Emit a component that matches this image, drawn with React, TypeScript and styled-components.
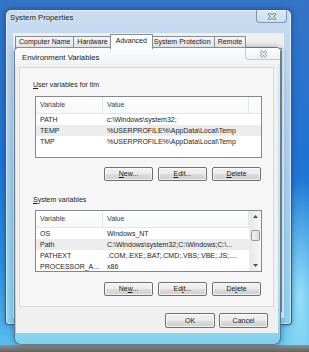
import React from 'react';
import styled, { createGlobalStyle } from 'styled-components';

const GlobalStyle = createGlobalStyle`
  html, body {
    margin: 0;
    padding: 0;
  }
  body {
    width: 309px;
    height: 352px;
    overflow: hidden;
    font-family: "Liberation Sans", Arial, sans-serif;
  }
`;

const userVars = [
  { name: 'PATH', value: 'c:\\Windows\\system32;' },
  { name: 'TEMP', value: '%USERPROFILE%\\AppData\\Local\\Temp', hot: true },
  { name: 'TMP', value: '%USERPROFILE%\\AppData\\Local\\Temp' },
];

const systemVars = [
  { name: 'OS', value: 'Windows_NT' },
  { name: 'Path', value: 'C:\\Windows\\system32;C:\\Windows;C:\\...', hot: true },
  { name: 'PATHEXT', value: '.COM;.EXE;.BAT;.CMD;.VBS;.VBE;.JS;....' },
  { name: 'PROCESSOR_A...', value: 'x86' },
];

const tabs = ['Computer Name', 'Hardware', 'Advanced', 'System Protection', 'Remote'];

/* ---------- desktop + windows ---------- */

const Desktop = styled.div`
  position: relative;
  width: 309px;
  height: 352px;
  overflow: hidden;
  background:
    linear-gradient(180deg, transparent 0, transparent 345px, #8e8e8e 345px, #626262 352px),
    radial-gradient(ellipse 30px 120px at 300px 300px, rgba(160, 230, 250, 0.9), rgba(160, 230, 250, 0) 100%),
    linear-gradient(180deg, #3574c6 0%, #1f72d2 45%, #2b8fe0 75%, #5ec0ee 100%);
`;

const SysWindow = styled.div`
  position: absolute;
  left: 5px;
  top: 9px;
  width: 287px;
  height: 316px;
  box-sizing: border-box;
  display: flex;
  flex-direction: column;
  border: 1px solid rgba(25, 50, 85, 0.75);
  border-radius: 6px 6px 4px 4px;
  background: linear-gradient(180deg, #c9dcf0 0%, #b6d2ee 25%, #a2cdee 60%, #8ad3f1 100%);
  box-shadow: inset 0 0 0 1px rgba(255, 255, 255, 0.55), 0 0 5px rgba(0, 20, 60, 0.35);
`;

const TitleBar = styled.div`
  display: flex;
  align-items: flex-start;
  height: 23px;
  padding-left: 4px;
`;

const WindowTitle = styled.span`
  margin-top: 3px;
  font-size: 7.75px;
  line-height: 10px;
  color: #1b1b1b;
  text-shadow: 0 0 4px rgba(255, 255, 255, 0.9);
`;

const CaptionClose = styled.div`
  margin-left: auto;
  margin-right: 4px;
  width: 31px;
  height: 13px;
  box-sizing: border-box;
  display: flex;
  align-items: center;
  justify-content: center;
  border: 1px solid rgba(60, 85, 120, 0.55);
  border-top: none;
  border-radius: 0 0 4px 4px;
  background: linear-gradient(180deg, rgba(255, 255, 255, 0.35), rgba(255, 255, 255, 0.1));
`;

const Client = styled.div`
  flex: 1;
  margin: 0 7px 6px 7px;
  background: #f0f0f0;
  display: flex;
  flex-direction: column;
  padding: 1px 2px 6px 2px;
`;

const TabStrip = styled.div`
  display: flex;
  align-items: flex-end;
  height: 14px;
`;

const Tab = styled.div<{ $active?: boolean }>`
  position: relative;
  z-index: ${p => (p.$active ? 2 : 1)};
  height: ${p => (p.$active ? 15 : 12)}px;
  margin: 0 ${p => (p.$active ? -2 : 0)}px ${p => (p.$active ? -1 : 0)}px;
  padding: 0 ${p => (p.$active ? 5 : 3)}px;
  box-sizing: border-box;
  border: 1px solid #898c95;
  border-bottom: ${p => (p.$active ? 'none' : '1px solid #898c95')};
  margin-left: ${p => (p.$active ? -2 : -1)}px;
  background: ${p => (p.$active ? '#ffffff' : 'linear-gradient(180deg, #f5f5f5, #e2e2e2)')};
  font-size: 7px;
  line-height: ${p => (p.$active ? 12 : 10)}px;
  color: #1a1a1a;
  white-space: nowrap;
  &:first-child {
    margin-left: 0;
  }
`;

const TabPanel = styled.div`
  flex: 1;
  border: 1px solid #898c95;
  background: #ffffff;
`;

/* ---------- environment variables dialog ---------- */

const EnvDialog = styled.div`
  position: absolute;
  left: 14px;
  top: 47px;
  width: 267px;
  height: 298px;
  box-sizing: border-box;
  display: flex;
  flex-direction: column;
  border: 1px solid rgba(70, 90, 110, 0.75);
  border-radius: 5px 5px 7px 7px;
  background: linear-gradient(180deg, #dcebf6 0%, #b4e0f3 80%, #82d1ef 100%);
  box-shadow: 0 0 6px rgba(0, 30, 60, 0.35);
`;

const EnvTitleBar = styled.div`
  display: flex;
  align-items: flex-start;
  height: 16px;
  padding-left: 7px;
  border-radius: 4px 4px 0 0;
  background: linear-gradient(180deg, #fbfcfd, #f1f3f5);
`;

const EnvTitle = styled.span`
  margin-top: 5px;
  font-size: 7.75px;
  line-height: 10px;
  color: #1b1b1b;
`;

const EnvClose = styled.div`
  margin-left: auto;
  width: 35px;
  height: 12px;
  box-sizing: border-box;
  display: flex;
  align-items: center;
  justify-content: center;
  border: 1px solid #c3cad3;
  border-top: none;
  border-right: none;
  border-radius: 0 4px 0 4px;
  background: linear-gradient(180deg, #ffffff, #eef0f3);
`;

const EnvBody = styled.div`
  flex: 1;
  margin: 0 2px 11px 1px;
  padding: 3px 4px 5px 3px;
  background: #f0f0f0;
  display: flex;
  flex-direction: column;
`;

const Panel = styled.div`
  border: 1px solid #dadada;
  background: #f6f6f6;
  padding: 12px 11px 10px 15px;
  display: flex;
  flex-direction: column;
`;

const SectionLabel = styled.div<{ $gap: number }>`
  margin: ${p => p.$gap}px 0 0 -2px;
  font-size: 7px;
  line-height: 9px;
  color: #1e1e1e;
`;

const ListBox = styled.div<{ $gap: number }>`
  margin-top: ${p => p.$gap}px;
  height: 62px;
  box-sizing: border-box;
  border: 1px solid #828790;
  background: #ffffff;
  display: flex;
  overflow: hidden;
`;

const ListContent = styled.div`
  flex: 1;
  min-width: 0;
  display: flex;
  flex-direction: column;
`;

const HeaderRow = styled.div`
  display: grid;
  grid-template-columns: 67px 146px 1fr;
  height: 16px;
  flex-shrink: 0;
  border-bottom: 1px solid #e5e5e5;
  background: linear-gradient(180deg, #ffffff, #f7f8f9);
`;

const HeaderCell = styled.div`
  padding-left: 4px;
  border-right: 1px solid #e5e5e5;
  font-size: 7px;
  line-height: 16px;
  color: #3a4656;
  &:last-child {
    border-right: none;
  }
`;

const Row = styled.div<{ $hot?: boolean }>`
  display: grid;
  grid-template-columns: 67px 1fr;
  height: 11px;
  flex-shrink: 0;
  background: ${p => (p.$hot ? '#ececec' : 'transparent')};
`;

const Cell = styled.div`
  padding-left: 4px;
  font-size: 7px;
  line-height: 11px;
  color: #1e1e1e;
  white-space: nowrap;
  overflow: hidden;
`;

const ScrollBar = styled.div`
  width: 11px;
  display: flex;
  flex-direction: column;
  background: linear-gradient(90deg, #e8e8e8, #f6f6f6);
  border-left: 1px solid #ececec;
`;

const ScrollArrow = styled.div`
  height: 11px;
  display: flex;
  align-items: center;
  justify-content: center;
`;

const ScrollTrack = styled.div`
  flex: 1;
  padding: 8px 1px 0;
`;

const ScrollThumb = styled.div`
  height: 11px;
  box-sizing: border-box;
  border: 1px solid #979797;
  border-radius: 2px;
  background: linear-gradient(90deg, #f3f3f3, #dcdcdc);
`;

const ButtonRow = styled.div<{ $gap: number; $right: number }>`
  display: flex;
  justify-content: flex-end;
  gap: 5px;
  margin-top: ${p => p.$gap}px;
  margin-right: ${p => p.$right}px;
`;

const PushButton = styled.button<{ $w?: number; $h?: number }>`
  width: ${p => p.$w ?? 49}px;
  height: ${p => p.$h ?? 14}px;
  box-sizing: border-box;
  padding: 0;
  border: 1px solid #707070;
  border-radius: 2px;
  background: linear-gradient(180deg, #f2f2f2 0%, #ebebeb 50%, #dddddd 51%, #cfcfcf 100%);
  box-shadow: inset 0 0 0 1px rgba(255, 255, 255, 0.7);
  font-family: "Liberation Sans", Arial, sans-serif;
  font-size: 7px;
  line-height: 10px;
  color: #1a1a1a;
`;

const FooterRow = styled.div`
  display: flex;
  justify-content: flex-end;
  gap: 4px;
  margin: 6px 6px 0 0;
`;

/* ---------- small drawings ---------- */

const CloseGlyph = () => (
  <svg width="8" height="7" viewBox="0 0 8 7">
    <path d="M1.5 1 L6.5 6 M6.5 1 L1.5 6" stroke="#4a5a70" strokeWidth="2.6" strokeLinecap="round" />
    <path d="M1.5 1 L6.5 6 M6.5 1 L1.5 6" stroke="#ffffff" strokeWidth="1.3" strokeLinecap="round" />
  </svg>
);

const HollowClose = () => (
  <svg width="9" height="8" viewBox="0 0 9 8">
    <path d="M1.5 1 L7.5 7 M7.5 1 L1.5 7" stroke="#8a8f96" strokeWidth="2.6" />
    <path d="M1.5 1 L7.5 7 M7.5 1 L1.5 7" stroke="#f7f7f7" strokeWidth="1.2" />
  </svg>
);

const Arrow = ({ up }: { up?: boolean }) => (
  <svg width="5" height="3" viewBox="0 0 5 3">
    <path d={up ? 'M0 3 L2.5 0 L5 3 Z' : 'M0 0 L2.5 3 L5 0 Z'} fill="#505050" />
  </svg>
);

type Variable = { name: string; value: string; hot?: boolean };

const VarList = ({ items, gap, scroll }: { items: Variable[]; gap: number; scroll?: boolean }) => (
  <ListBox $gap={gap}>
    <ListContent>
      <HeaderRow>
        <HeaderCell>Variable</HeaderCell>
        <HeaderCell>Value</HeaderCell>
        <HeaderCell />
      </HeaderRow>
      {items.map(v => (
        <Row key={v.name} $hot={v.hot}>
          <Cell>{v.name}</Cell>
          <Cell>{v.value}</Cell>
        </Row>
      ))}
    </ListContent>
    {scroll && (
      <ScrollBar>
        <ScrollArrow>
          <Arrow up />
        </ScrollArrow>
        <ScrollTrack>
          <ScrollThumb />
        </ScrollTrack>
        <ScrollArrow>
          <Arrow />
        </ScrollArrow>
      </ScrollBar>
    )}
  </ListBox>
);

export default function App() {
  return (
    <>
      <GlobalStyle />
      <Desktop>
        <SysWindow>
          <TitleBar>
            <WindowTitle>System Properties</WindowTitle>
            <CaptionClose>
              <CloseGlyph />
            </CaptionClose>
          </TitleBar>
          <Client>
            <TabStrip>
              {tabs.map(t => (
                <Tab key={t} $active={t === 'Advanced'}>
                  {t}
                </Tab>
              ))}
            </TabStrip>
            <TabPanel />
          </Client>
        </SysWindow>

        <EnvDialog>
          <EnvTitleBar>
            <EnvTitle>Environment Variables</EnvTitle>
            <EnvClose>
              <HollowClose />
            </EnvClose>
          </EnvTitleBar>
          <EnvBody>
            <Panel>
              <SectionLabel $gap={0}>
                <u>U</u>ser variables for tim
              </SectionLabel>
              <VarList items={userVars} gap={7} />
              <ButtonRow $gap={9} $right={1}>
                <PushButton><u>N</u>ew...</PushButton>
                <PushButton><u>E</u>dit...</PushButton>
                <PushButton><u>D</u>elete</PushButton>
              </ButtonRow>

              <SectionLabel $gap={14}>
                <u>S</u>ystem variables
              </SectionLabel>
              <VarList items={systemVars} gap={6} scroll />
              <ButtonRow $gap={10} $right={1}>
                <PushButton>Ne<u>w</u>...</PushButton>
                <PushButton>Ed<u>i</u>t...</PushButton>
                <PushButton>De<u>l</u>ete</PushButton>
              </ButtonRow>
            </Panel>
            <FooterRow>
              <PushButton $w={50} $h={15}>OK</PushButton>
              <PushButton $w={49} $h={15}>Cancel</PushButton>
            </FooterRow>
          </EnvBody>
        </EnvDialog>
      </Desktop>
    </>
  );
}
